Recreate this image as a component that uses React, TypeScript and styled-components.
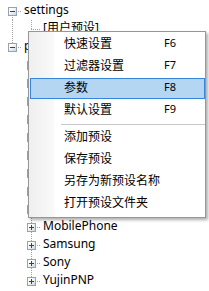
import React from 'react';
import styled, { createGlobalStyle } from 'styled-components';

const Global = createGlobalStyle`
  html, body { margin: 0; padding: 0; background: #fff; }
  body {
    width: 209px; height: 291px; overflow: hidden;
    font-family: "Noto Sans", "Noto Sans CJK SC", sans-serif;
  }
`;

const Page = styled.div`
  position: relative;
  width: 209px;
  height: 291px;
  overflow: hidden;
  background: #fff;
`;

const dots = (dir: string) =>
  `repeating-linear-gradient(${dir}, #a0a0a0 0 1px, transparent 1px 2px)`;

const Tree = styled.ul`
  list-style: none;
  margin: 0;
  padding: 2px 0 0 3px;
`;

const Row = styled.li`
  display: flex;
  align-items: flex-start;
  height: 18px;
`;

const Cell = styled.span<{ $up?: boolean; $down?: boolean; $across?: boolean }>`
  position: relative;
  display: flex;
  flex: none;
  width: 19px;
  height: 18px;
  &::before {
    content: '';
    position: absolute;
    left: 9px;
    width: 1px;
    top: ${(p) => (p.$up ? '0' : '9px')};
    bottom: ${(p) => (p.$down ? '0' : '9px')};
    background: ${dots('to bottom')};
    display: ${(p) => (p.$up || p.$down ? 'block' : 'none')};
  }
  &::after {
    content: '';
    position: absolute;
    top: 9px;
    left: 9px;
    width: 10px;
    height: 1px;
    background: ${dots('to right')};
    display: ${(p) => (p.$across ? 'block' : 'none')};
  }
`;

const BoxSvg = styled.svg`
  position: relative;
  z-index: 1;
  flex: none;
  margin: 5px 0 0 5px;
  display: block;
`;

const Label = styled.span`
  margin-left: 2px;
  font-size: 12px;
  line-height: 15px;
  color: #000;
  white-space: nowrap;
`;

const Expander = ({ open, id }: { open: boolean; id: string }) => (
  <BoxSvg width="9" height="9" viewBox="0 0 9 9">
    <defs>
      <linearGradient id={id} x1="0" y1="0" x2="1" y2="1">
        <stop offset="0.3" stopColor="#ffffff" />
        <stop offset="1" stopColor="#c9d1db" />
      </linearGradient>
    </defs>
    <rect x="0.5" y="0.5" width="8" height="8" fill={`url(#${id})`} stroke="#95a2b2" />
    <path d="M2 4.5h5" stroke="#25408c" strokeWidth="1" />
    {!open && <path d="M4.5 2v5" stroke="#25408c" strokeWidth="1" />}
  </BoxSvg>
);

const Menu = styled.div`
  position: absolute;
  left: 28px;
  top: 31px;
  z-index: 5;
  width: 178px;
  box-sizing: border-box;
  border: 1px solid #979797;
  padding: 2px 0;
  background: linear-gradient(to right, #efefef 0, #f9f9f9 25px, #ffffff 25px);
  box-shadow: 2px 2px 3px rgba(0, 0, 0, 0.32);
`;

const Item = styled.div<{ $active?: boolean }>`
  display: grid;
  grid-template-columns: 100px auto;
  box-sizing: border-box;
  height: 21px;
  margin: 0 0 1px 1px;
  padding-left: 33px;
  border: 1px solid ${(p) => (p.$active ? '#3585dc' : 'transparent')};
  background: ${(p) => (p.$active ? '#b5d6f3' : 'transparent')};
  color: #000;
`;

const ItemText = styled.span`
  font-family: "Noto Sans CJK SC", sans-serif;
  font-size: 12px;
  line-height: 16px;
  white-space: nowrap;
`;

const Shortcut = styled.span`
  font-family: "Noto Sans", sans-serif;
  font-size: 11px;
  line-height: 16px;
`;

const Separator = styled.div`
  height: 1px;
  margin: 3px 0 2px 32px;
  background: #c8c8c8;
`;

type TreeRow = {
  label?: string;
  level: 0 | 1;
  box?: 'plus' | 'minus';
  up: boolean;
  down: boolean;
  pass?: boolean;
};

const rows: TreeRow[] = [
  { label: 'settings', level: 0, box: 'minus', up: false, down: true },
  { label: '[用户预设]', level: 1, up: true, down: false, pass: true },
  { label: 'p', level: 0, box: 'minus', up: true, down: false },
  ...Array.from({ length: 9 }, () => ({ level: 1 as const, box: 'plus' as const, up: true, down: true })),
  { label: 'MobilePhone', level: 1, box: 'plus', up: true, down: true },
  { label: 'Samsung', level: 1, box: 'plus', up: true, down: true },
  { label: 'Sony', level: 1, box: 'plus', up: true, down: true },
  { label: 'YujinPNP', level: 1, box: 'plus', up: true, down: false },
];

const topItems = [
  { text: '快速设置', key: 'F6' },
  { text: '过滤器设置', key: 'F7' },
  { text: '参数', key: 'F8', active: true },
  { text: '默认设置', key: 'F9' },
];

const bottomItems = ['添加预设', '保存预设', '另存为新预设名称', '打开预设文件夹'];

export default function App() {
  return (
    <Page>
      <Global />
      <Tree>
        {rows.map((r, i) => (
          <Row key={i}>
            {r.level === 1 && <Cell $up={r.pass} $down={r.pass} />}
            <Cell $up={r.up} $down={r.down} $across>
              {r.box && <Expander open={r.box === 'minus'} id={`g${i}`} />}
            </Cell>
            {r.label && <Label>{r.label}</Label>}
          </Row>
        ))}
      </Tree>
      <Menu>
        {topItems.map((m) => (
          <Item key={m.text} $active={m.active}>
            <ItemText>{m.text}</ItemText>
            <Shortcut>{m.key}</Shortcut>
          </Item>
        ))}
        <Separator />
        {bottomItems.map((t) => (
          <Item key={t}>
            <ItemText>{t}</ItemText>
          </Item>
        ))}
      </Menu>
    </Page>
  );
}
